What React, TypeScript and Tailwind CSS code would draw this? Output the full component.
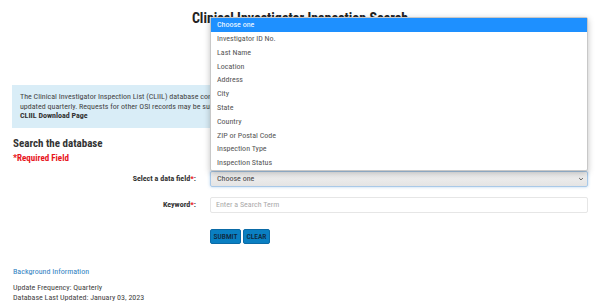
import React from "react";

const options = [
  "Choose one",
  "Investigator ID No.",
  "Last Name",
  "Location",
  "Address",
  "City",
  "State",
  "Country",
  "ZIP or Postal Code",
  "Inspection Type",
  "Inspection Status",
];

export default function App() {
  return (
    <div className="relative w-[600px] h-[308px] overflow-hidden bg-white text-[#444] font-['Roboto_Condensed','Liberation_Sans_Narrow','DejaVu_Sans_Condensed',Roboto,sans-serif] text-[8px] leading-[9.5px]">
      <h1 className="pt-[9px] text-center text-[14px] leading-[18px] font-bold text-[#222]">
        Clinical Investigator Inspection Search
      </h1>

      <div className="mx-[12px] mt-[58px] h-[43px] bg-[#d9edf7] px-[8px] pt-[7px] text-[#444]">
        <p>
          The Clinical Investigator Inspection List (CLIIL) database contains information on Clinical Investigator inspections from FY 1977 through the present. The database is
        </p>
        <p>
          updated quarterly. Requests for other OSI records may be submitted to the FDA Freedom of Information Office. The CLIIL database is available for download from the
        </p>
        <p className="font-bold text-[#333]">CLIIL Download Page</p>
      </div>

      <h2 className="mx-[13px] mt-[9px] text-[11px] leading-[13px] font-bold text-[#333]">Search the database</h2>
      <p className="mx-[13px] mt-[3px] text-[9px] leading-[11px] font-bold text-[#e8141c]">*Required Field</p>

      <div className="mt-[7px] grid grid-cols-[196px_378px] gap-x-[14px] gap-y-[10px] items-center">
        <label className="text-right font-bold text-[#333]">
          Select a data field<span className="text-[#e8141c]">*</span>:
        </label>
        <div className="relative">
          <div className="flex h-[16px] items-center justify-between rounded-[2px] border border-[#a9c9e8] bg-gradient-to-b from-[#f2f2f2] to-[#e4e4e4] pl-[6px] pr-[3px] text-[#444] shadow-[0_0_3px_rgba(102,163,224,0.5)]">
            <span>Choose one</span>
            <svg width="6" height="6" viewBox="0 0 10 10" className="text-[#555]">
              <path d="M2 3.5 L5 6.5 L8 3.5" fill="none" stroke="currentColor" strokeWidth="1.6" />
            </svg>
          </div>
          <ul className="absolute bottom-full left-0 w-full rounded-[2px] border border-[#c8c8c8] bg-white shadow-[0_2px_6px_rgba(0,0,0,0.25)]">
            {options.map((o, i) => (
              <li
                key={o}
                className={
                  i === 0
                    ? "h-[13.8px] pl-[6px] leading-[13.8px] bg-[#1e90ff] text-white"
                    : "h-[13.8px] pl-[6px] leading-[13.8px] text-[#555]"
                }
              >
                {o}
              </li>
            ))}
          </ul>
        </div>

        <label className="text-right font-bold text-[#333]">
          Keyword<span className="text-[#e8141c]">*</span>:
        </label>
        <div className="flex h-[16px] items-center rounded-[2px] border border-[#e6e6e6] bg-white pl-[5px] text-[#aaa]">
          Enter a Search Term
        </div>

        <div />
        <div className="mt-[6px] flex gap-[2px]">
          <button className="h-[15px] rounded-[2px] border border-[#0a6aa6] bg-[#0a7fc2] px-[2.5px] text-[7.5px] leading-[13px] font-medium text-[#10283d]">
            SUBMIT
          </button>
          <button className="h-[15px] rounded-[2px] border border-[#0a6aa6] bg-[#0a7fc2] px-[2.5px] text-[7.5px] leading-[13px] font-medium text-[#10283d]">
            CLEAR
          </button>
        </div>
      </div>

      <p className="mx-[13px] mt-[23px] text-[#2f7fbf]">Background Information</p>
      <p className="mx-[13px] mt-[6px] leading-[10px] text-[#444]">Update Frequency: Quarterly</p>
      <p className="mx-[13px] leading-[10px] text-[#444]">Database Last Updated: January 03, 2023</p>
    </div>
  );
}
